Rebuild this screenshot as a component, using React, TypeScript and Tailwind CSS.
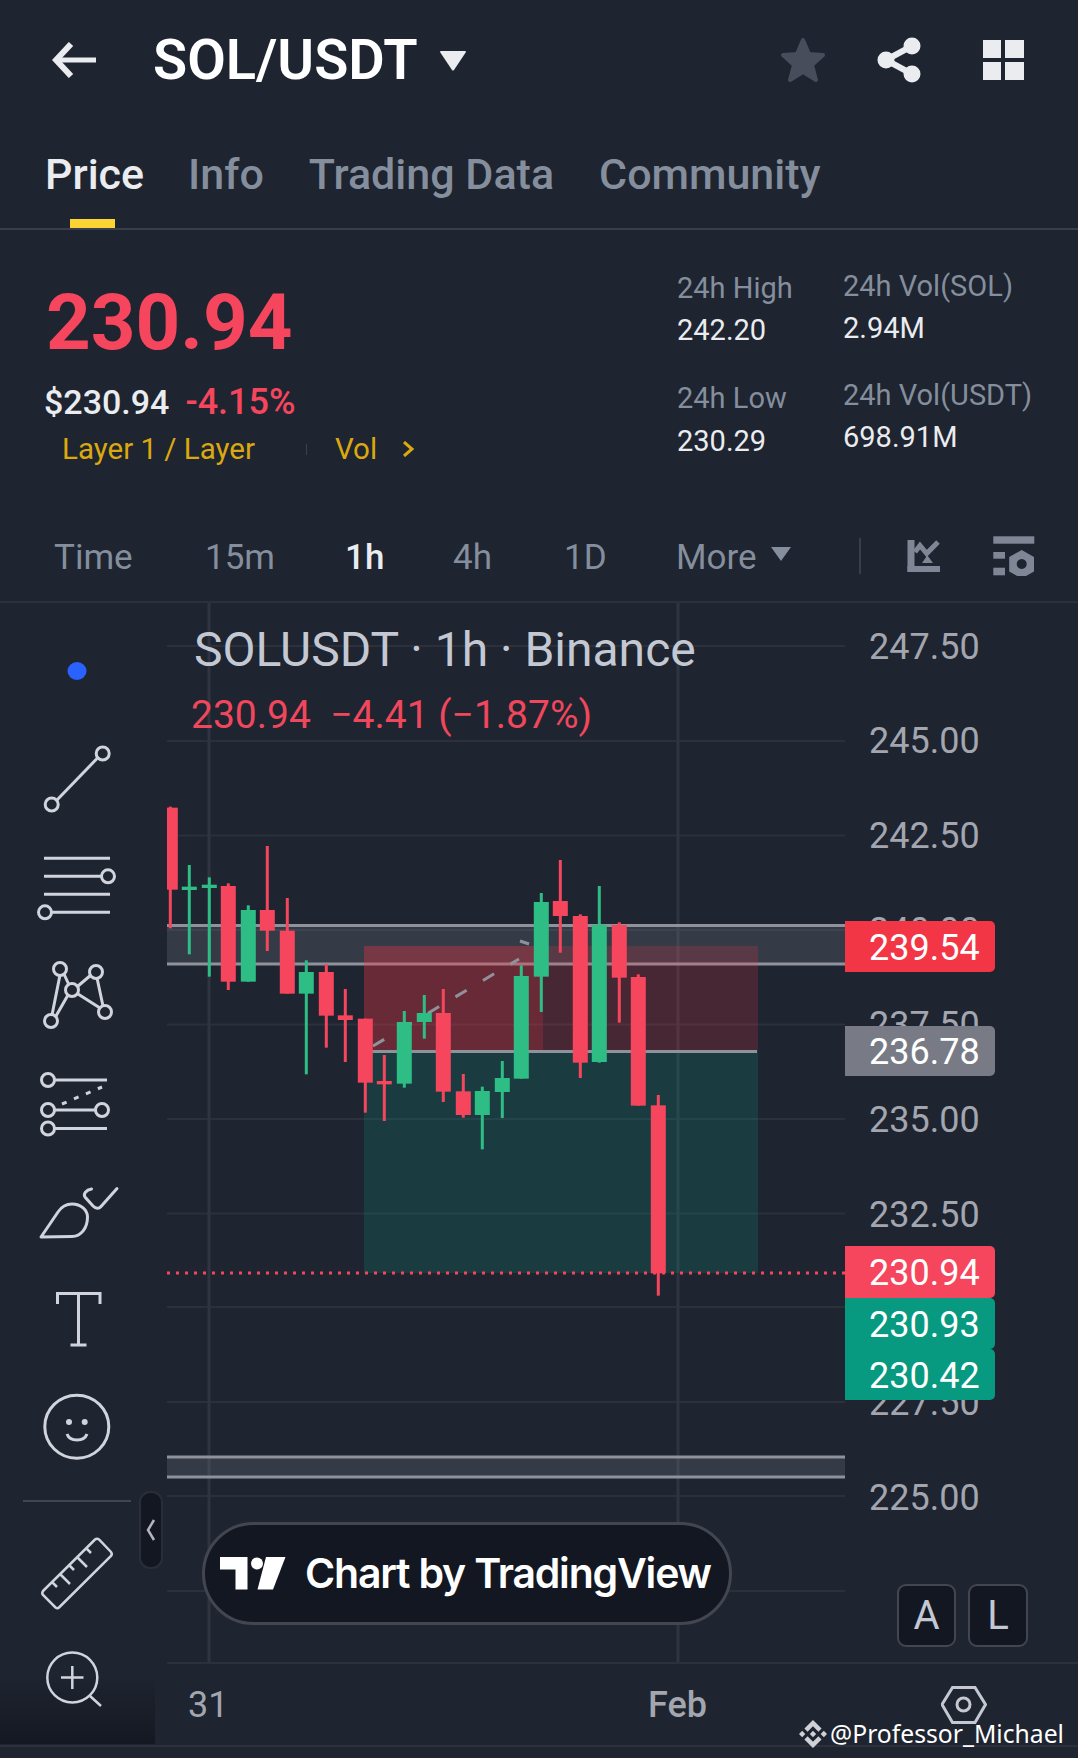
import React from "react";
import { SiBinance } from "react-icons/si";

const RED = "#f6465d";
const GREEN = "#2ebd85";
const STROKE = "#d1d4dc";

type C = [number, number, number, number, number, "r" | "g"];
// cx (page px), then wick top, body top, body bottom, wick bottom as crop coordinates
const left: C[] = [
  [170.3, 80, 83, 329, 445, "r"],
  [189.3, 255, 320, 330, 523, "g"],
  [209.3, 292, 314, 324, 590, "g"],
  [228.3, 310, 318, 605, 630, "r"],
  [248.3, 376, 390, 605, 605, "g"],
  [267.3, 198, 390, 452, 513, "r"],
  [287.3, 354, 452, 641, 641, "r"],
  [306.3, 541, 576, 641, 883, "g"],
  [326.3, 552, 576, 707, 803, "r"],
  [345.3, 627, 706, 720, 846, "r"],
  [365.3, 716, 716, 908, 998, "r"],
  [384.3, 825, 903, 913, 1023, "r"],
  [404.3, 693, 726, 911, 923, "g"],
  [424.3, 645, 699, 726, 776, "g"],
  [443.3, 627, 699, 935, 966, "r"],
  [463.3, 882, 934, 1005, 1013, "r"],
];
const right: C[] = [
  [482.3, 800, 813, 885, 988, "g"],
  [502.3, 723, 774, 816, 894, "g"],
  [521.3, 436, 468, 776, 776, "g"],
  [541.3, 219, 246, 470, 576, "g"],
  [560.3, 120, 243, 288, 398, "r"],
  [580.3, 283, 288, 728, 774, "r"],
  [599.3, 198, 315, 726, 728, "g"],
  [619.3, 307, 315, 473, 608, "r"],
  [638.3, 463, 471, 857, 857, "r"],
  [658.3, 825, 856, 1360, 1427, "r"],
];

const candles = [
  ...left.map((c) => ({ cx: c[0], wt: 780 + c[1] / 3, bt: 780 + c[2] / 3, bb: 780 + c[3] / 3, wb: 780 + c[4] / 3, col: c[5] })),
  ...right.map((c) => ({ cx: c[0], wt: 820 + c[1] / 3, bt: 820 + c[2] / 3, bb: 820 + c[3] / 3, wb: 820 + c[4] / 3, col: c[5] })),
];

const gridY = [646, 741, 835.5, 930, 1024.5, 1119, 1213.5, 1307, 1402, 1496, 1591];

function Tool({ y, h, children }: { y: number; h: number; children?: React.ReactNode }) {
  return (
    <svg width={167} height={h} viewBox={`0 ${y} 167 ${h}`} fill="none" stroke={STROKE} strokeWidth={3} className="block overflow-visible">
      {children}
    </svg>
  );
}

function Chart() {
  return (
    <svg width={678} height={1059} viewBox="167 603 678 1059" className="block">
      {gridY.map((y) => (
        <line key={y} x1={167} x2={845} y1={y} y2={y} stroke="#2b303b" strokeWidth={2} />
      ))}
      <line x1={209} x2={209} y1={603} y2={1662} stroke="#2f3440" strokeWidth={3} />
      <line x1={678} x2={678} y1={603} y2={1662} stroke="#2f3440" strokeWidth={3} />

      <rect x={167} y={925} width={678} height={39} fill="rgba(120,123,134,0.25)" />
      <rect x={167} y={1456} width={678} height={21} fill="rgba(120,123,134,0.25)" />
      <g stroke="#8f929b" strokeWidth={3}>
        <line x1={167} x2={845} y1={925.5} y2={925.5} />
        <line x1={167} x2={845} y1={964} y2={964} />
        <line x1={167} x2={845} y1={1457} y2={1457} />
        <line x1={167} x2={845} y1={1477} y2={1477} />
      </g>

      <rect x={364} y={946} width={394} height={105} fill="rgba(242,54,69,0.2)" />
      <rect x={364} y={946} width={179} height={105} fill="rgba(242,54,69,0.2)" />
      <rect x={364} y={1051} width={394} height={222} fill="rgba(8,153,129,0.2)" />
      <line x1={364} x2={757} y1={1051.5} y2={1051.5} stroke="#8f929b" strokeWidth={3} />
      <polyline points="373,1046 519,959" stroke="#8f929b" strokeWidth={3} strokeDasharray="13 19" fill="none" />
      <line x1={520} x2={529} y1={941} y2={944} stroke="#8f929b" strokeWidth={3} />

      <line x1={167} x2={845} y1={1273} y2={1273} stroke={RED} strokeWidth={3} strokeDasharray="3 6" />

      {candles.map((c, i) => {
        const fill = c.col === "r" ? RED : GREEN;
        return (
          <g key={i} fill={fill}>
            <rect x={c.cx - 1.5} y={c.wt} width={3} height={c.wb - c.wt} />
            <rect x={c.cx - 7.5} y={c.bt} width={15} height={c.bb - c.bt} />
          </g>
        );
      })}
    </svg>
  );
}

const axisLabels: [string, number][] = [
  ["247.50", 647],
  ["245.00", 741],
  ["242.50", 836],
  ["240.00", 931],
  ["237.50", 1025],
  ["235.00", 1120],
  ["232.50", 1214.5],
  ["227.50", 1402.5],
  ["225.00", 1498],
];

const tags: [string, number, number, string][] = [
  ["239.54", 921, 51, "bg-[#f23645]"],
  ["236.78", 1026, 50, "bg-[#787b86]"],
  ["230.94", 1246, 52, "bg-[#f6465d]"],
  ["230.93", 1298, 51, "bg-[#089981]"],
  ["230.42", 1349, 51, "bg-[#089981]"],
];

export default function App() {
  return (
    <div className="relative w-[1078px] h-[1758px] overflow-hidden bg-[#1e2430] text-[#eaecef] font-['Roboto',sans-serif]">
      {/* top bar */}
      <header className="h-[120px] flex items-center pl-[52px]">
        <svg width={44} height={36} viewBox="52 42 44 36" fill="none" stroke="#eaecef" strokeWidth={5}>
          <path d="M96 60H58" />
          <path d="M71 44L56 60L71 76" strokeWidth={6} />
        </svg>
        <h1 className="ml-[57px] text-[56px] leading-[60px] font-semibold text-white">SOL/USDT</h1>
        <svg width={28} height={21} viewBox="0 0 28 21" className="ml-[21px]">
          <path d="M1 2Q1 1 2 1H26Q27 1 27 2L15 20Q14 21 13 20Z" fill="#eaecef" />
        </svg>
        <svg width={46} height={46} viewBox="0 0 46 46" className="ml-[313px]">
          <path d="M23 3L29 17L43 18L32 28L36 43L23 35L10 43L14 28L3 18L17 17Z" fill="#474d5b" stroke="#474d5b" strokeWidth={4} strokeLinejoin="round" />
        </svg>
        <svg width={44} height={46} viewBox="877 36 44 46" className="ml-[51px]" fill="#eaecef" stroke="#eaecef">
          <line x1={912} y1={45} x2={886} y2={59} strokeWidth={6} />
          <line x1={912} y1={73} x2={886} y2={59} strokeWidth={6} />
          <circle cx={912} cy={45} r={8.5} stroke="none" />
          <circle cx={886} cy={59} r={8.5} stroke="none" />
          <circle cx={912} cy={73} r={8.5} stroke="none" />
        </svg>
        <div className="ml-[62px] grid grid-cols-2 gap-[4px] w-[41px]">
          <div className="h-[18px] bg-[#eaecef]" />
          <div className="h-[18px] bg-[#eaecef]" />
          <div className="h-[18px] bg-[#eaecef]" />
          <div className="h-[18px] bg-[#eaecef]" />
        </div>
      </header>

      {/* tabs */}
      <nav className="h-[110px] border-b-2 border-[#383e4a] flex flex-col">
        <div className="flex pl-[45px] pt-[30px] text-[43px] leading-[49px] text-[#848e9c] font-medium">
          <span className="text-[#eaecef]">Price</span>
          <span className="ml-[44px]">Info</span>
          <span className="ml-[45px]">Trading Data</span>
          <span className="ml-[45px]">Community</span>
        </div>
        <div className="mt-auto ml-[70px] w-[45px] h-[9px] bg-[#fcd535]" />
      </nav>

      {/* stats */}
      <section className="h-[300px] flex">
        <div className="pl-[47px] pt-[53px] w-[677px]">
          <div className="text-[78px] leading-[80px] font-bold text-[#f6465d] -ml-[1px]">230.94</div>
          <div className="mt-[19px] flex items-baseline text-[34px] leading-[40px] font-medium -ml-[3px]">
            <span>$230.94</span>
            <span className="ml-[16px] text-[36px] text-[#f6465d]">-4.15%</span>
          </div>
          <div className="mt-[9px] flex items-center text-[29.5px] leading-[36px] text-[#dba90f] ml-[15px]">
            <span className="w-[244px]">Layer 1 / Layer</span>
            <span className="w-[1px] h-[11px] bg-[#3a404c]" />
            <span className="ml-[28px]">Vol</span>
            <svg width={12} height={16} viewBox="0 0 12 16" className="ml-[25px]" fill="none" stroke="#dba90f" strokeWidth={3}>
              <path d="M2 1L10 8L2 15" />
            </svg>
          </div>
        </div>
        <div className="w-[166px] pt-[40px] text-[29px] leading-[36px]">
          <div className="text-[#848e9c]">24h High</div>
          <div className="mt-[6px]">242.20</div>
          <div className="mt-[32px] text-[#848e9c]">24h Low</div>
          <div className="mt-[7px]">230.29</div>
        </div>
        <div className="pt-[38px] text-[29px] leading-[36px] whitespace-nowrap">
          <div className="text-[#848e9c]">24h Vol(SOL)</div>
          <div className="mt-[6px]">2.94M</div>
          <div className="mt-[31px] text-[#848e9c]">24h Vol(USDT)</div>
          <div className="mt-[6px]">698.91M</div>
        </div>
      </section>

      {/* interval bar */}
      <div className="h-[73px] border-b-2 border-[#2b303b] flex items-center pb-[15px] pl-[54px] text-[35px] leading-[44px] text-[#848e9c]">
        <span className="w-[151px]">Time</span>
        <span className="w-[140px]">15m</span>
        <span className="w-[108px] text-[#eaecef] font-medium">1h</span>
        <span className="w-[111px]">4h</span>
        <span className="w-[112px]">1D</span>
        <span className="w-[95px]">More</span>
        <svg width={20} height={14} viewBox="0 0 20 14" className="-mt-[8px]">
          <path d="M0 0H20L10 14Z" fill="#848e9c" />
        </svg>
        <span className="ml-[68px] w-[2px] h-[36px] bg-[#383e4a] -mt-[4px]" />
        <svg width={33} height={33} viewBox="907 538 33 33" className="ml-[46px] -mt-[4px]" fill="#7f8796">
          <rect x={907.5} y={538} width={7} height={32} />
          <rect x={907.5} y={564} width={32.5} height={6} />
          <path d="M915 550L920 543.5L926.7 551.5L938 540" fill="none" stroke="#7f8796" strokeWidth={5} />
          <path d="M927.3 553.3L922 561H933Z" />
        </svg>
        <svg width={42} height={40} viewBox="993 534 42 40" className="ml-[53px] -mt-[4px]" fill="#7f8796">
          <rect x={993.3} y={534.3} width={41} height={7.4} />
          <rect x={993.3} y={550} width={11.7} height={6.7} />
          <rect x={993.3} y={565.7} width={11.7} height={7.6} />
          <path fillRule="evenodd" d="M1021.7 548L1034 555V569.5L1021.7 576.5L1009.2 569.5V555ZM1021.7 557a5 5 0 1 0 .01 0Z" />
        </svg>
      </div>

      {/* chart area */}
      <div className="flex h-[1142px]">
        {/* drawing tools */}
        <aside className="relative w-[167px] shrink-0 flex flex-col">
          <Tool y={603} h={117}>
            <ellipse cx={77} cy={671} rx={9.5} ry={9} fill="#2962ff" stroke="none" />
          </Tool>
          <Tool y={720} h={120}>
            <line x1={56.5} y1={800.5} x2={98} y2={757.5} />
            <circle cx={51.7} cy={804.5} r={6.5} />
            <circle cx={102.7} cy={753.5} r={6.5} />
          </Tool>
          <Tool y={840} h={100}>
            <line x1={44} x2={110} y1={858.3} y2={858.3} />
            <line x1={44} x2={101} y1={876.3} y2={876.3} />
            <line x1={44} x2={110} y1={894.3} y2={894.3} />
            <line x1={52} x2={110} y1={912.3} y2={912.3} />
            <circle cx={108} cy={876.3} r={6.5} />
            <circle cx={45} cy={912.3} r={6.5} />
          </Tool>
          <Tool y={940} h={110}>
            <path d="M60 975L52 1015M64 974L69 985M56 1016L68 995M78 986L91 975M78 994L100 1008M97 978L103 1006" />
            <circle cx={60} cy={969} r={6.5} />
            <circle cx={96} cy={972} r={6.5} />
            <circle cx={72} cy={990} r={6.5} />
            <circle cx={105} cy={1012} r={6.5} />
            <circle cx={51} cy={1021} r={6.5} />
          </Tool>
          <Tool y={1050} h={110}>
            <line x1={55} x2={107} y1={1080} y2={1080} />
            <line x1={55} x2={95} y1={1110} y2={1110} />
            <line x1={55} x2={107} y1={1128.5} y2={1128.5} />
            <line x1={62} y1={1104} x2={102} y2={1087} strokeDasharray="5 8" />
            <circle cx={48} cy={1080} r={6.5} />
            <circle cx={48} cy={1110} r={6.5} />
            <circle cx={102} cy={1110} r={6.5} />
            <circle cx={48} cy={1128.5} r={6.5} />
          </Tool>
          <Tool y={1160} h={110}>
            <path d="M41 1237L58 1212C62 1206 67 1204 72 1204C81 1204 87.5 1210 87.5 1217C87.5 1228 81 1236.5 72 1236.5Z" strokeLinejoin="round" />
            <path d="M91.5 1189C86 1190 83 1194 85 1197L93 1206C96 1209 99 1209 101 1206.5L117 1188.5" strokeLinecap="round" />
          </Tool>
          <Tool y={1270} h={115} >
            <path d="M57.5 1304V1293.5H100V1304M78.5 1293.5V1345M70.5 1345H86.5" />
          </Tool>
          <Tool y={1385} h={105}>
            <ellipse cx={76.8} cy={1426.7} rx={32} ry={31.5} />
            <circle cx={69} cy={1422} r={3} fill={STROKE} stroke="none" />
            <circle cx={84.7} cy={1422} r={3} fill={STROKE} stroke="none" />
            <path d="M67 1434C70 1442 84 1442 87 1434" />
          </Tool>
          <div className="ml-[23px] mt-[10px] w-[108px] h-[2px] bg-[#434651] mb-[28px]" />
          <Tool y={1530} h={110}>
            <path d="M43 1591L95 1539.5Q97 1538 99 1539.5L111 1552Q112.5 1554 111 1556L59 1607.5Q57.5 1609 55.5 1607.5L43 1595Q41.5 1593 43 1591Z" strokeWidth={2.5} />
            <path d="M52 1582L57 1587M60 1574L70 1584M69 1565L74 1570M77 1557L87 1567M86 1548L91 1553" strokeWidth={2.5} />
          </Tool>
          <div className="h-[104px] w-[155px] bg-linear-to-b from-transparent from-[35%] to-[#141822]">
            <Tool y={1640} h={104}>
              <circle cx={72.3} cy={1677.5} r={25} strokeWidth={2.5} />
              <path d="M61 1677.5H83.5M72.3 1666V1689M90 1696L101 1706" strokeWidth={2.5} />
            </Tool>
          </div>
          <div className="absolute left-[139px] top-[888px] z-10 w-[24px] h-[78px] rounded-[11px] bg-[#131722] border-2 border-[#2a2e39] flex items-center justify-center">
            <svg width={10} height={22} viewBox="0 0 10 22" fill="none" stroke="#b2b5be" strokeWidth={2.5}>
              <path d="M8 1L2 11L8 21" />
            </svg>
          </div>
        </aside>

        <div className="flex-1 flex flex-col">
          <div className="flex h-[1059px]">
            {/* plot */}
            <div className="relative w-[678px] h-[1059px] shrink-0">
              <Chart />
              <div className="absolute left-[27px] top-[19px] text-[48px] leading-[56px] text-[#c4c8d2] whitespace-pre">SOLUSDT · 1h · Binance</div>
              <div className="absolute left-[24px] top-[88px] text-[39px] leading-[48px] text-[#f0475c] whitespace-pre">230.94  −4.41 (−1.87%)</div>
              <div className="absolute left-[35px] top-[919px] w-[530px] h-[103px] rounded-full bg-[#131722] border-[3px] border-[#434651] flex items-center pl-[15px]">
                <svg width={66} height={33} viewBox="0 0 66 33" fill="#fff">
                  <path d="M0 0H27.5V32.5H15.5V12.5H0Z" />
                  <circle cx={37} cy={6.5} r={6} />
                  <path d="M46 0H65.5L53 32.5H37.5Z" />
                </svg>
                <span className="ml-[19px] text-[41px] font-semibold tracking-[-1.2px] text-white font-['Inter',sans-serif] whitespace-nowrap">Chart by TradingView</span>
              </div>
            </div>

            {/* price axis */}
            <div className="relative flex-1 text-[36px] leading-[44px] text-[#a3a6af]">
              {axisLabels.map(([t, y]) => (
                <div key={t} className="absolute left-[24px]" style={{ top: y - 603 - 22 }}>
                  {t}
                </div>
              ))}
              {tags.map(([t, y, h, bg]) => (
                <div key={t} className={`absolute left-0 w-[150px] rounded-r-[5px] pl-[24px] pt-[2px] flex items-center text-white ${bg}`} style={{ top: y - 603, height: h }}>
                  {t}
                </div>
              ))}
              <div className="absolute left-[52px] top-[981px] w-[59px] h-[63px] rounded-[9px] bg-[#131722] border-2 border-[#434651] flex items-center justify-center text-[#c4c8d2] text-[40px]">A</div>
              <div className="absolute left-[123px] top-[981px] w-[60px] h-[63px] rounded-[9px] bg-[#131722] border-2 border-[#434651] flex items-center justify-center text-[#c4c8d2] text-[40px]">L</div>
            </div>
          </div>

          {/* time axis */}
          <div className="flex-1 border-t-2 border-[#2b303b] flex items-center text-[36px] leading-[44px] text-[#a3a6af]">
            <span className="ml-[21px] w-[460px]">31</span>
            <span className="font-medium w-[293px]">Feb</span>
            <svg width={46} height={38} viewBox="941 1685.5 46 38" fill="none" stroke="#c5c8d0" strokeWidth={3}>
              <path d="M942 1704L952.5 1687H975L985.5 1704L975 1722H952.5Z" />
              <circle cx={963.5} cy={1704} r={6.5} />
            </svg>
          </div>
        </div>
      </div>

      <div className="border-t-2 border-[#2b303b]" />

      {/* watermark */}
      <div className="absolute left-[799px] top-[1718px] flex items-center text-[24.7px] leading-[32px] text-white font-['Noto_Sans',sans-serif] whitespace-nowrap">
        <SiBinance size={28} color="#cfd1d6" />
        <span className="ml-[3px]">@Professor_Michael</span>
      </div>
    </div>
  );
}
